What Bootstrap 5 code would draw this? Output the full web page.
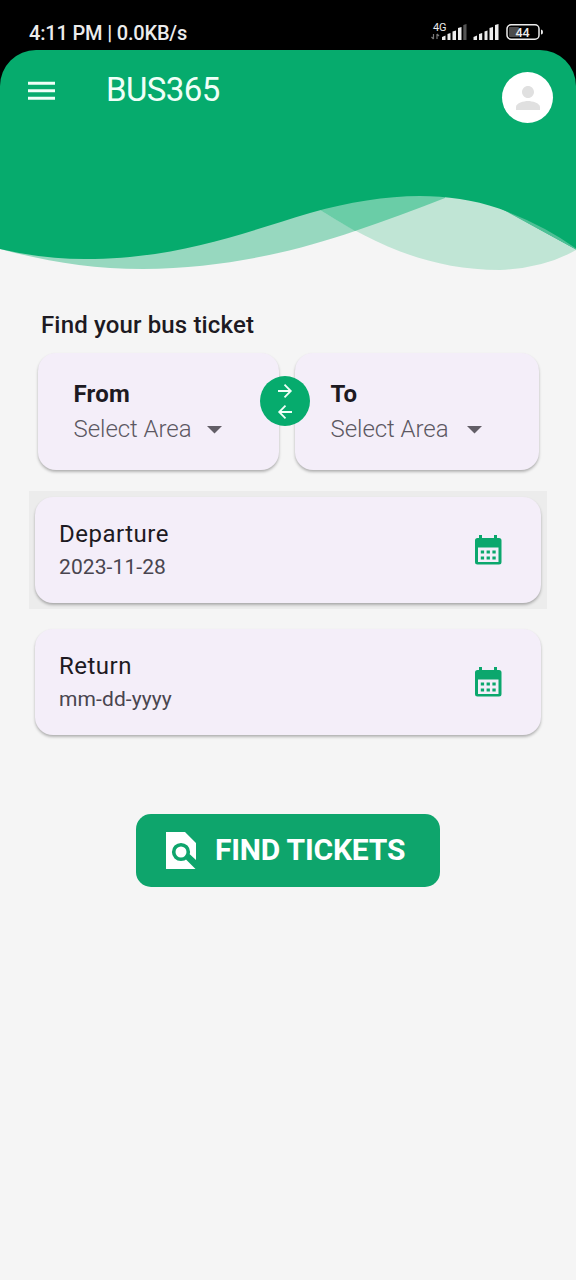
<!DOCTYPE html>
<html lang="en">
<head>
<meta charset="utf-8">
<meta name="viewport" content="width=device-width, initial-scale=1">
<title>BUS365</title>
<link rel="stylesheet" href="https://cdn.jsdelivr.net/npm/bootstrap@5.3.0/dist/css/bootstrap.min.css">
<style>
  body { font-family: Roboto, sans-serif; background: #f5f5f5; color: #1d1a22; }
  svg { display: block; flex: none; }
  .screen { width: 576px; height: 1280px; overflow: hidden; }
  .status { height: 50px; background: #000; color: #ececec; padding: 16px 32px 0 29px; font-size: 20px; line-height: 35px; }
  .clock { letter-spacing: -.18px; }
  .hero { height: 222px; }
  .hero-bg { left: 0; top: 0; z-index: 0; }
  .topbar { z-index: 1; padding: 22px 23px 0 28px; }
  .brand { font-size: 33px; line-height: 36px; margin: 0 0 0 51px; color: #f0fff8; font-weight: 400; letter-spacing: -.6px; }
  .avatar { width: 51px; height: 51px; background: #fff; }
  .heading { font-size: 24px; line-height: 30px; font-weight: 500; letter-spacing: .15px; margin: 38px 0 0 41px; }
  .tile { background: #f4eef9; border: 0; border-radius: 18px; box-shadow: 0 2px 3px rgba(0,0,0,.26), 0 1px 2px rgba(0,0,0,.04); }
  .places { margin: 13px 37px 0 38px; gap: 16px; }
  .place { height: 117px; padding: 25px 0 0 35.5px; }
  .place-from { width: 241px; }
  .place-to { width: 244px; }
  .place-name { font-size: 24px; line-height: 32px; font-weight: 700; letter-spacing: .2px; }
  .place-value { font-size: 24px; line-height: 38px; font-weight: 300; color: #5c5862; letter-spacing: -.05px; }
  .caret { margin-top: 2px; }
  .caret-from { margin-left: 16px; }
  .caret-to { margin-left: 19px; }
  .swap { width: 50px; height: 50px; left: 222px; top: 23px; background: #06ab6d; gap: 5px; }
  .picked { background: #ececec; margin: 21px 29px 0; padding: 6px; }
  .unpicked { margin: 14px 29px 0; padding: 6px; }
  .date { height: 106px; padding: 0 33px 0 24px; }
  .date-name { font-size: 24px; line-height: 34px; letter-spacing: .5px; }
  .date-value { font-size: 21px; line-height: 33px; color: #49454f; letter-spacing: .1px; }
  .find { width: 304px; height: 73px; margin-top: 73px; border: 0; border-radius: 15px; background: #0ea56c; color: #fff; font-size: 30px; font-weight: 700; padding: 0 0 0 30px; }
  .find:hover { background: #0ea56c; color: #fff; }
  .find-text { margin-left: 18px; padding-bottom: 3px; letter-spacing: -.2px; }
</style>
</head>
<body>
<div class="screen d-flex flex-column">
  <div class="status d-flex justify-content-between">
    <span class="clock fw-medium">4:11 PM | 0.0KB/s</span>
    <svg width="114" height="24" viewBox="430 16 114 24" fill="#ececec">
      <text x="433" y="31" font-size="11" font-family="Roboto, sans-serif" letter-spacing="-.3">4G</text>
      <path d="M433.500 34v5M437 34v5M431.500 37l2 2M439 36l-2-2" stroke="#777" stroke-width="1.200" fill="none"/>
      <path d="M442 37l3.500-1.500V40h-3.500zM447.500 34l3-1v7h-3zM452.500 31.500l3.500-1V40h-3.500zM458 28l3.500-1v13h-3.500z"/>
      <path d="M463.300 25l3.200-1v16h-3.200z" fill="#555"/>
      <path d="M473.500 37l3.500-1.500V40h-3.500zM479 34l3.200-1v7h-3.200zM484.500 31.500l3-1V40h-3zM489.500 28l3.500-1v13h-3.500zM495 25l3.500-1v16H495z"/>
      <rect x="509" y="27" width="10" height="10" rx="1" fill="#4b4b4b"/>
      <rect x="507" y="24.800" width="32" height="14.400" rx="4" fill="none" stroke="#ececec" stroke-width="1.500"/>
      <path d="M541 29.500q2 0 2 2.500t-2 2.500z"/>
      <text x="522.500" y="37" font-size="12.500" font-weight="500" text-anchor="middle" font-family="Roboto, sans-serif">44</text>
    </svg>
  </div>

  <header class="hero position-relative">
    <svg class="hero-bg position-absolute" width="576" height="222" viewBox="0 50 576 222">
      <path d="M0 50H50V100H0zM526 50H576V100H526z" fill="#000"/>
      <path d="M0 249C45 261 90 269 143 269C230 268 300 250 355 231Q402 215 445 198L445 180H0z" fill="#97d8bf"/>
      <path d="M495 190V206L576 250V190z" fill="#4fc096"/>
      <path d="M320 210C370 241 425 270 500 270Q545 268 576 250L500 208V180H320z" fill="#c0e5d5"/>
      <path d="M320 210Q336 220 355 231Q402 215 445 198V180H320z" fill="#6acda7"/>
      <path d="M0 86A36 36 0 0 1 36 50H540A36 36 0 0 1 576 86V248.500Q544 225 499 208.500C440 189 380 194 310 213C237 235 176 259 85 259Q42 259 0 249z" fill="#06ab6d"/>
    </svg>
    <div class="topbar d-flex align-items-start position-relative">
      <svg class="mt-2" width="27" height="22" viewBox="0 0 27 22"><path d="M0 3.300H27M0 10.800H27M0 18.300H27" stroke="#f0fff8" stroke-width="3"/></svg>
      <h1 class="brand">BUS365</h1>
      <div class="avatar rounded-circle ms-auto d-flex align-items-center justify-content-center">
        <svg width="24" height="24" viewBox="4 4 16 16" fill="#e0e0e0"><path d="M12 12c2.210 0 4-1.790 4-4s-1.790-4-4-4-4 1.790-4 4 1.790 4 4 4zm0 2c-2.670 0-8 1.340-8 4v2h16v-2c0-2.660-5.330-4-8-4z"/></svg>
      </div>
    </div>
  </header>

  <h2 class="heading">Find your bus ticket</h2>
  <div class="places d-flex position-relative">
    <div class="tile place place-from">
      <div class="place-name">From</div>
      <div class="place-value d-flex align-items-center"><span>Select Area</span>
        <svg class="caret caret-from" width="15" height="8" viewBox="0 0 15 8"><path d="M0 0h15L7.500 7.500z" fill="#625e67"/></svg></div>
    </div>
    <div class="tile place place-to">
      <div class="place-name">To</div>
      <div class="place-value d-flex align-items-center"><span>Select Area</span>
        <svg class="caret caret-to" width="15" height="8" viewBox="0 0 15 8"><path d="M0 0h15L7.500 7.500z" fill="#625e67"/></svg></div>
    </div>
    <div class="swap rounded-circle position-absolute d-flex flex-column align-items-center justify-content-center">
      <svg width="16" height="16" viewBox="0 0 16 16" fill="none" stroke="#f0fff8" stroke-width="1.800"><path d="M1 8H14M7.500 1.700L13.800 8L7.500 14.300"/></svg>
      <svg width="16" height="16" viewBox="0 0 16 16" fill="none" stroke="#f0fff8" stroke-width="1.800"><path d="M15 8H2M8.500 1.700L2.200 8L8.500 14.300"/></svg>
    </div>
  </div>

  <div class="picked">
    <div class="tile date d-flex align-items-center justify-content-between">
      <div><div class="date-name">Departure</div><div class="date-value">2023-11-28</div></div>
      <svg width="34" height="34" viewBox="0 0 34 34" fill="#0ba76d"><path fill-rule="evenodd" d="M5 2h3v3h12V2h3v3h2q2.500 0 2.500 2.500v21.500q0 2.500-2.500 2.500H3.500Q1 31.500 1 29V7.500Q1 5 3.500 5H5zM4 14.500V29h20.500V14.500z"/><path d="M6.800 17.500h3.300v3H6.800zM12.600 17.500h3.300v3h-3.300zM18.400 17.500h3.300v3h-3.300zM6.800 23.500h3.300v3H6.800zM12.600 23.500h3.300v3h-3.300zM18.400 23.500h3.300v3h-3.300z"/></svg>
    </div>
  </div>
  <div class="unpicked">
    <div class="tile date d-flex align-items-center justify-content-between">
      <div><div class="date-name">Return</div><div class="date-value">mm-dd-yyyy</div></div>
      <svg width="34" height="34" viewBox="0 0 34 34" fill="#0ba76d"><path fill-rule="evenodd" d="M5 2h3v3h12V2h3v3h2q2.500 0 2.500 2.500v21.500q0 2.500-2.500 2.500H3.500Q1 31.500 1 29V7.500Q1 5 3.500 5H5zM4 14.500V29h20.500V14.500z"/><path d="M6.800 17.500h3.300v3H6.800zM12.600 17.500h3.300v3h-3.300zM18.400 17.500h3.300v3h-3.300zM6.800 23.500h3.300v3H6.800zM12.600 23.500h3.300v3h-3.300zM18.400 23.500h3.300v3h-3.300z"/></svg>
    </div>
  </div>

  <button type="button" class="find btn d-flex align-items-center align-self-center">
    <svg width="31" height="38" viewBox="0 0 31 38">
      <path d="M0 0H19L30 11V28L23.500 22L21 25L30 34.500V37H0z" fill="#fff"/>
      <circle cx="15" cy="20" r="7.300" fill="#fff" stroke="#0ea56c" stroke-width="3.600"/>
      <path d="M20 25L31 36" stroke="#0ea56c" stroke-width="3.600"/>
    </svg>
    <span class="find-text">FIND TICKETS</span>
  </button>
</div>
<script src="https://cdn.jsdelivr.net/npm/bootstrap@5.3.0/dist/js/bootstrap.bundle.min.js"></script>
</body>
</html>
